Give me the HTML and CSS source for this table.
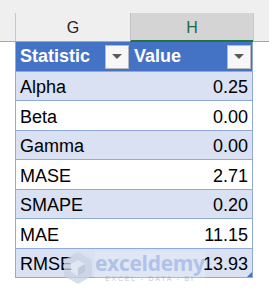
FILE: index.html
```html
<!DOCTYPE html>
<html>
<head>
<meta charset="utf-8">
<link rel="stylesheet" href="styles.css">
</head>
<body>
<div class="sheet">
  <div class="colbar">
    <div class="corner"></div>
    <div class="colhead">G</div>
    <div class="colhead sel">H</div>
    <div class="colrest"></div>
  </div>
  <div class="table">
    <div class="row head">
      <div class="cell g">Statistic<span class="dd"><span class="tri"></span></span></div>
      <div class="cell h">Value<span class="dd"><span class="tri"></span></span></div>
    </div>
    <div class="row band"><div class="cell g">Alpha</div><div class="cell h num">0.25</div></div>
    <div class="row plain"><div class="cell g">Beta</div><div class="cell h num">0.00</div></div>
    <div class="row band"><div class="cell g">Gamma</div><div class="cell h num">0.00</div></div>
    <div class="row plain"><div class="cell g">MASE</div><div class="cell h num">2.71</div></div>
    <div class="row band"><div class="cell g">SMAPE</div><div class="cell h num">0.20</div></div>
    <div class="row plain"><div class="cell g">MAE</div><div class="cell h num">11.15</div></div>
    <div class="row band last"><div class="cell g">RMSE</div><div class="cell h num">13.93</div><span class="handle"></span></div>
  </div>
  <div class="watermark">
    <svg class="logo" width="32" height="34" viewBox="0 0 32 34">
      <polygon points="16,1 30,9 30,25 16,33 2,25 2,9" fill="#c9d3e3"/>
      <polygon points="16,9 23,13 23,21 16,25 9,21 9,13" fill="#e4e9f1"/>
      <polygon points="16,17 23,13 23,21 16,25" fill="#b7c3d8"/>
    </svg>
    <div class="wm-text">
      <span class="brand">exceldemy</span>
      <span class="tag">EXCEL - DATA - BI</span>
    </div>
  </div>
</div>
</body>
</html>
```

FILE: styles.css
```css
html, body {
  margin: 0;
  padding: 0;
  background: #ffffff;
}
.sheet {
  position: relative;
  width: 269px;
  height: 300px;
  overflow: hidden;
  font-family: "Liberation Sans", Arial, sans-serif;
}
.colbar {
  display: flex;
  box-sizing: border-box;
  height: 42px;
  padding-top: 13px;
  background: #efefef;
  border-bottom: 1px solid #a8a8a8;
}
.corner {
  width: 15px;
  border-right: 1px solid #c8c8c8;
}
.colhead {
  width: 114px;
  display: flex;
  align-items: center;
  justify-content: center;
  font-size: 16px;
  color: #222222;
  padding-top: 1px;
  box-sizing: border-box;
}
.colhead.sel {
  width: 123px;
  background: #d4d4d4;
  color: #1d6b45;
  border-left: 1px solid #c0c0c0;
  box-shadow: 0 1px 0 #217346, inset 0 -1px 0 #217346;
}
.colrest {
  flex: 1;
  border-left: 1px solid #c8c8c8;
}
.table {
  margin-left: 15px;
  width: 238px;
  box-sizing: border-box;
  border-left: 1px solid #8eaadb;
  border-right: 1px solid #8eaadb;
  border-bottom: 1px solid #8eaadb;
}
.row {
  display: flex;
  box-sizing: border-box;
  position: relative;
}
.row.head {
  height: 29px;
  background: #4472c4;
}
.row.band {
  height: 29px;
  background: #d9e1f2;
  border-top: 1px solid #8eaadb;
}
.row.plain {
  height: 30px;
  background: #ffffff;
  border-top: 1px solid #8eaadb;
}
.cell {
  display: flex;
  align-items: center;
  box-sizing: border-box;
  font-size: 18px;
  color: #000000;
  padding-top: 3px;
}
.cell.g {
  width: 114px;
  padding-left: 4px;
}
.cell.h {
  width: 122px;
  padding-left: 4px;
}
.cell.num {
  justify-content: flex-end;
  padding-right: 4px;
}
.head .cell {
  color: #ffffff;
  font-weight: bold;
  justify-content: space-between;
  padding-right: 1px;
  padding-top: 0;
}
.dd {
  width: 24px;
  height: 24px;
  box-sizing: border-box;
  background: #f7f7f7;
  border: 1px solid #b9b9b9;
  display: flex;
  align-items: center;
  justify-content: center;
}
.tri {
  width: 0;
  height: 0;
  border-left: 5px solid transparent;
  border-right: 5px solid transparent;
  border-top: 5px solid #5a5a5a;
}
.handle {
  position: absolute;
  right: 0;
  bottom: 0;
  width: 0;
  height: 0;
  border-left: 5px solid transparent;
  border-bottom: 5px solid #4472c4;
}
.watermark {
  position: absolute;
  left: 62px;
  top: 251px;
  display: flex;
  align-items: flex-start;
  gap: 1px;
  opacity: 0.75;
}
.wm-text {
  display: flex;
  flex-direction: column;
  align-items: center;
  gap: 1px;
  padding-top: 2px;
  background: rgba(255, 255, 255, 0.25);
}
.brand {
  font-family: "Open Sans", "Liberation Sans", sans-serif;
  font-weight: bold;
  font-size: 21px;
  line-height: 21px;
  color: #a3b8e6;
  letter-spacing: -0.3px;
}
.tag {
  font-family: "Liberation Sans", sans-serif;
  font-size: 7px;
  line-height: 7px;
  letter-spacing: 1.8px;
  color: #b5b5b5;
}
```
